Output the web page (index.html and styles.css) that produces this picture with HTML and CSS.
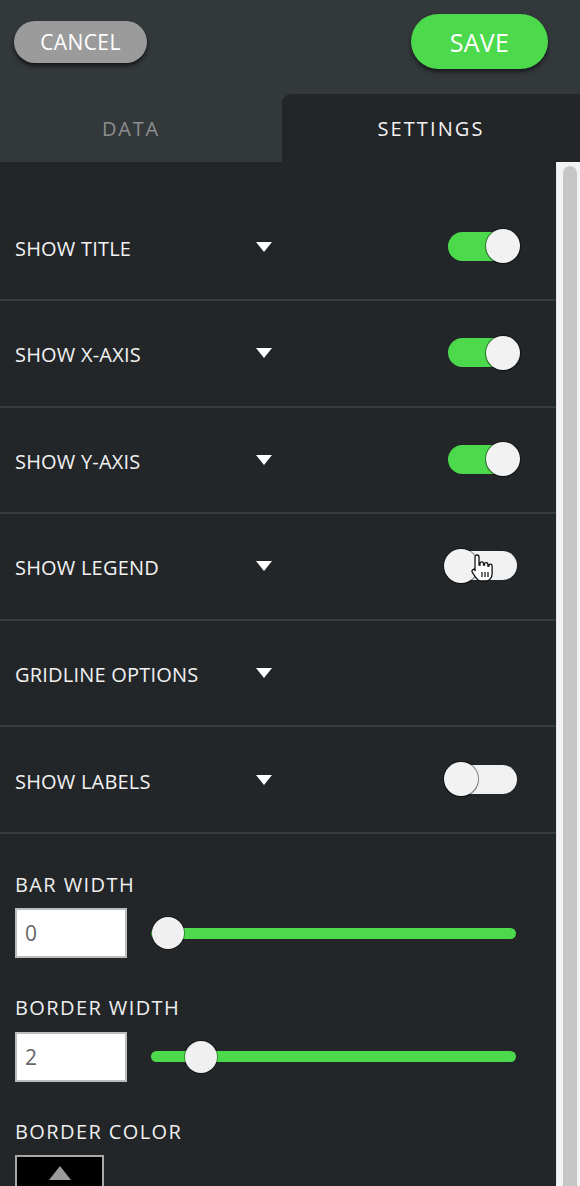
FILE: index.html
```html
<!DOCTYPE html>
<html lang="en">
<head>
<meta charset="utf-8">
<title>Chart settings</title>
<link rel="stylesheet" href="styles.css">
</head>
<body>
<div class="app">
  <header class="topbar">
    <button class="btn btn-cancel">CANCEL</button>
    <button class="btn btn-save">SAVE</button>
  </header>
  <nav class="tabs">
    <div class="tab tab-data">DATA</div>
    <div class="tab tab-active">SETTINGS</div>
  </nav>
  <div class="body">
    <main class="panel">
      <div class="rows">
        <div class="row">
          <span class="label">SHOW TITLE</span>
          <span class="caret"></span>
          <span class="switch on"><span class="track"></span><span class="knob"></span></span>
        </div>
        <div class="row">
          <span class="label">SHOW X-AXIS</span>
          <span class="caret"></span>
          <span class="switch on"><span class="track"></span><span class="knob"></span></span>
        </div>
        <div class="row">
          <span class="label">SHOW Y-AXIS</span>
          <span class="caret"></span>
          <span class="switch on"><span class="track"></span><span class="knob"></span></span>
        </div>
        <div class="row">
          <span class="label">SHOW LEGEND</span>
          <span class="caret"></span>
          <span class="switch off"><span class="track"></span><span class="knob"></span>
            <svg class="cursor" width="26" height="32" viewBox="0 0 26 32">
              <path d="M7 2c1.1 0 2 .9 2 2v8h1v-1.5c0-1.1.9-1.6 1.8-1.6s1.7.6 1.7 1.6V12h1v-.8c0-1 .8-1.5 1.7-1.5s1.7.6 1.7 1.6V13h1v-.4c0-1 .8-1.4 1.6-1.4.9 0 1.6.6 1.6 1.6V21c0 3.5-2.5 7-6.5 7H11c-2 0-3.5-1-4.6-2.6L2.3 19.3c-.6-.9-.4-2 .4-2.6.8-.6 1.9-.4 2.5.3L5 18V4c0-1.1.9-2 2-2z" fill="#fff" stroke="#111" stroke-width="1.3"/>
              <path d="M12 19v5M15 19v5M18 19v5" stroke="#111" stroke-width="1.2"/>
            </svg>
          </span>
        </div>
        <div class="row">
          <span class="label">GRIDLINE OPTIONS</span>
          <span class="caret"></span>
        </div>
        <div class="row">
          <span class="label">SHOW LABELS</span>
          <span class="caret"></span>
          <span class="switch off"><span class="track"></span><span class="knob"></span></span>
        </div>
      </div>
      <div class="fields">
        <div class="field">
          <div class="field-label">BAR WIDTH</div>
          <div class="field-row">
            <input class="num" type="text" value="0">
            <div class="slider"><span class="bar"></span><span class="thumb" style="left: 2px"></span></div>
          </div>
        </div>
        <div class="field">
          <div class="field-label">BORDER WIDTH</div>
          <div class="field-row">
            <input class="num" type="text" value="2">
            <div class="slider"><span class="bar"></span><span class="thumb" style="left: 35px"></span></div>
          </div>
        </div>
        <div class="field">
          <div class="field-label">BORDER COLOR</div>
          <div class="field-row">
            <div class="swatch"><span class="swatch-arrow"></span></div>
          </div>
        </div>
      </div>
    </main>
    <div class="scrollbar"><div class="scroll-thumb"></div></div>
  </div>
</div>
</body>
</html>
```
FILE: styles.css
```css
* { box-sizing: border-box; }
html, body {
  margin: 0;
  padding: 0;
  width: 580px;
  height: 1186px;
  overflow: hidden;
  background: #222629;
  font-family: "Open Sans", "DejaVu Sans", sans-serif;
}
.app {
  width: 580px;
  height: 1186px;
  display: flex;
  flex-direction: column;
}
.topbar {
  height: 94px;
  flex: none;
  background: #33383b;
  display: flex;
  justify-content: space-between;
  align-items: flex-start;
  padding: 0 32px 0 14px;
}
.btn {
  border: none;
  color: #fff;
  font-family: "Open Sans", "DejaVu Sans", sans-serif;
  padding: 0;
  cursor: pointer;
}
.btn-cancel {
  margin-top: 21px;
  width: 133px;
  height: 42px;
  border-radius: 21px;
  background: #9b9b9b;
  font-size: 21px;
  letter-spacing: 0.4px;
  box-shadow: 0 3px 4px rgba(0, 0, 0, 0.6);
}
.btn-save {
  margin-top: 14px;
  width: 137px;
  height: 55px;
  border-radius: 28px;
  background: #4cd94c;
  font-size: 25px;
  letter-spacing: 0.3px;
  box-shadow: 0 3px 4px rgba(0, 0, 0, 0.55);
}
.tabs {
  height: 68px;
  flex: none;
  display: flex;
  background: #33383b;
}
.tab {
  display: flex;
  align-items: center;
  justify-content: center;
  font-size: 20px;
  letter-spacing: 1.8px;
}
.tab-data {
  width: 282px;
  padding-right: 20px;
  color: #8e8e8e;
}
.tab-active {
  flex: 1;
  background: #222629;
  color: #f2f2f2;
  border-top-left-radius: 9px;
  letter-spacing: 2.1px;
}
.body {
  flex: 1;
  display: flex;
  background: #222629;
  overflow: hidden;
}
.panel {
  width: 556px;
  flex: none;
}
.rows {
  padding-top: 32.4px;
}
.row {
  height: 106.6px;
  border-bottom: 2px solid #363b3e;
  display: flex;
  align-items: center;
  padding: 3px 36px 0 15px;
}
.label {
  width: 241px;
  flex: none;
  font-size: 20px;
  color: #f2f2f2;
  letter-spacing: 0.2px;
  white-space: nowrap;
}
.caret {
  width: 0;
  height: 0;
  border-left: 8px solid transparent;
  border-right: 8px solid transparent;
  border-top: 10px solid #ffffff;
  margin-top: -3px;
}
.switch {
  margin-left: auto;
  margin-top: -4px;
  width: 76px;
  height: 34px;
  position: relative;
}
.track {
  position: absolute;
  left: 4px;
  right: 3px;
  top: 2.5px;
  height: 29px;
  border-radius: 15px;
}
.on .track { background: #4cd94c; }
.off .track { background: #f1f1f1; }
.knob {
  position: absolute;
  top: 0;
  width: 34px;
  height: 34px;
  border-radius: 50%;
  background: #f2f2f2;
  box-shadow: 0 0 0 1px rgba(0, 0, 0, 0.4), 0 1px 2px rgba(0, 0, 0, 0.3);
}
.on .knob { right: 0; }
.off .knob { left: 0; }
.cursor {
  position: absolute;
  left: 26px;
  top: 4px;
}
.fields {
  padding: 37px 0 0 15px;
}
.field + .field {
  margin-top: 36px;
}
.field-label {
  font-size: 20px;
  line-height: 27px;
  color: #efefef;
  letter-spacing: 1.4px;
}
.field-row {
  margin-top: 10.5px;
  display: flex;
  align-items: center;
}
.num {
  width: 112px;
  height: 50px;
  border: 2px solid #bdbdbd;
  background: #fff;
  color: #666;
  font-family: "Open Sans", "DejaVu Sans", sans-serif;
  font-size: 21px;
  padding: 0 0 0 8px;
  margin: 0;
  outline: none;
}
.slider {
  margin-left: 23px;
  width: 366px;
  height: 32px;
  position: relative;
}
.bar {
  position: absolute;
  left: 1px;
  right: 0;
  top: 10.5px;
  height: 11px;
  border-radius: 6px;
  background: #4cd94c;
}
.thumb {
  position: absolute;
  top: 0;
  width: 32px;
  height: 32px;
  border-radius: 50%;
  background: #f0f0f0;
  box-shadow: 0 0 0 1px rgba(0, 0, 0, 0.35);
}
.swatch {
  width: 89px;
  height: 50px;
  border: 2px solid #a8a8a8;
  background: #000;
  display: flex;
  justify-content: center;
  padding-top: 9px;
}
.swatch-arrow {
  width: 0;
  height: 0;
  border-left: 11px solid transparent;
  border-right: 11px solid transparent;
  border-bottom: 14px solid #9a9a9a;
}
.scrollbar {
  flex: 1;
  background: #f3f3f3;
  border-left: 1px solid #e6e6e6;
  padding: 4px 3px 0 6px;
}
.scroll-thumb {
  height: 100%;
  background: #c6c6c6;
  border-radius: 7px 7px 0 0;
}
```
